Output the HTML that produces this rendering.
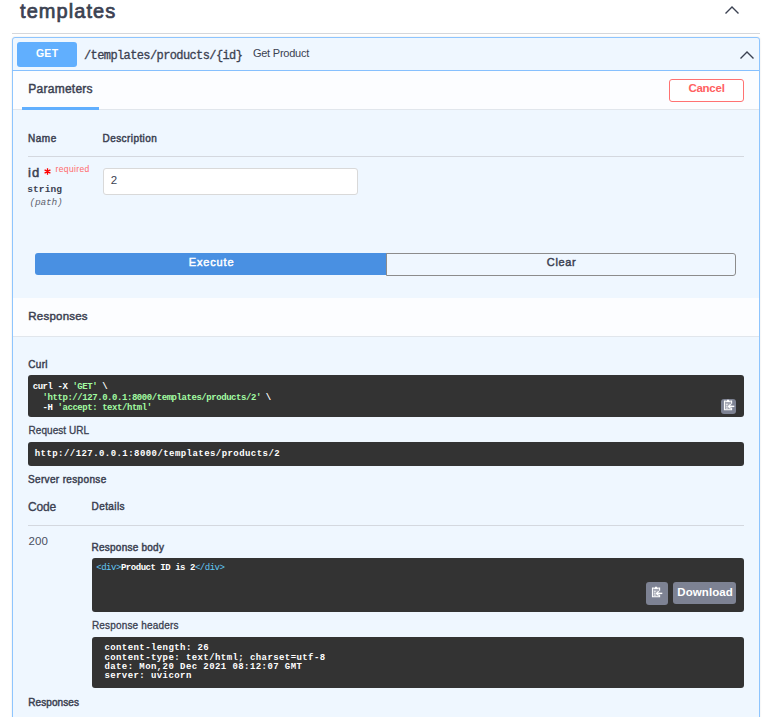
<!DOCTYPE html>
<html><head><meta charset="utf-8"><style>
html,body{margin:0;padding:0;background:#fff;}
body{width:768px;height:717px;overflow:hidden;position:relative;font-family:'Liberation Sans', sans-serif;}
.t{position:absolute;white-space:nowrap;line-height:1;}
.mono{font-family:'Liberation Mono', monospace;}
.a{position:absolute;box-sizing:border-box;}
</style></head><body>
<div class="a" style="left:12px;top:32.5px;width:748px;height:1.5px;background:#d5d7db"></div>
<div class="a" style="left:723.5px;top:1px;"><svg width="16" height="10" viewBox="0 0 16 10"><path d="M1.5 8.5 L8 2 L14.5 8.5" fill="none" stroke="#3b4151" stroke-width="1.4"/></svg></div>
<div class="a" style="left:12px;top:37px;width:748px;height:700px;border:1px solid #8ec5fe;border-radius:3px;background:#eff7ff;box-shadow:0 0 2px rgba(0,0,0,.12)"></div>
<div class="a" style="left:12px;top:69.8px;width:747px;height:1.4px;background:#86c0fe"></div>
<div class="a" style="left:17px;top:42px;width:60px;height:24.6px;background:#61affe;border-radius:3px"></div>
<div class="a" style="left:738.5px;top:46px;"><svg width="16" height="10" viewBox="0 0 16 10"><path d="M1.5 8.5 L8 2 L14.5 8.5" fill="none" stroke="#3b4151" stroke-width="1.4"/></svg></div>
<div class="a" style="left:13px;top:71.2px;width:745.6px;height:38.8px;background:#fcfdff;border-bottom:1px solid #e1e6ec"></div>
<div class="a" style="left:21.7px;top:106.8px;width:77px;height:3px;background:#61affe"></div>
<div class="a" style="left:669px;top:78.5px;width:75px;height:23px;border:1.5px solid #ff7272;border-radius:3px;background:#fff"></div>
<div class="a" style="left:27.5px;top:155.8px;width:716px;height:1px;background:#d4d8df"></div>
<div class="a" style="left:102.5px;top:167.5px;width:255px;height:27.3px;border:1px solid #d9d9d9;border-radius:3px;background:#fff"></div>
<div class="a" style="left:35px;top:253px;width:351.5px;height:22.3px;background:#4990e2;border-radius:3px 0 0 3px"></div>
<div class="a" style="left:386px;top:253px;width:350px;height:22.6px;border:1.5px solid #8c8c8c;border-radius:0 3px 3px 0"></div>
<svg class="a" style="left:43px;top:166.5px" width="9" height="9" viewBox="0 0 9 9"><path d="M4.5 1.2V7.8M1.6 2.85L7.4 6.15M1.6 6.15L7.4 2.85" stroke="#ff0000" stroke-width="1.3" fill="none"/></svg>
<div class="a" style="left:13px;top:298px;width:745.6px;height:38.5px;background:#fcfdff;border-bottom:1px solid #e1e6ec"></div>
<div class="a" style="left:28px;top:375px;width:716px;height:41.5px;background:#333;border-radius:3px"></div>
<div class="a" style="left:721px;top:398.8px;width:15px;height:14.8px;background:#7d8293;border-radius:3px"></div><svg class="a" style="left:723px;top:399px" width="11.5" height="11.5" viewBox="0 0 12 12"><rect x="1.5" y="2.2" width="7.5" height="9" fill="rgba(255,255,255,.3)"/><path d="M3 2.2H1.5V11.2H9V9M9 5V2.2H7.5" fill="none" stroke="#fff" stroke-width="1.1"/><path d="M3 3.2L4.2 0.8H6.3L7.5 3.2Z" fill="#fff"/><path d="M3 5.5H5M3 7.5H4.5M3 9.5H5" stroke="#fff" stroke-width="0.9"/><path d="M11.8 7.7H6.2" stroke="#fff" stroke-width="1.5"/><path d="M8 5.5L5.6 7.7L8 9.9" fill="none" stroke="#fff" stroke-width="1.2"/></svg>
<div class="a" style="left:28px;top:442px;width:716px;height:24px;background:#333;border-radius:3px"></div>
<div class="a" style="left:27.5px;top:525px;width:716px;height:1px;background:#d4d8df"></div>
<div class="a" style="left:91.5px;top:558px;width:652.3px;height:54px;background:#333;border-radius:3px"></div>
<div class="a" style="left:646px;top:582px;width:22.3px;height:22.6px;background:#7d8293;border-radius:3px"></div><svg class="a" style="left:651px;top:586px" width="11.5" height="11.5" viewBox="0 0 12 12"><rect x="1.5" y="2.2" width="7.5" height="9" fill="rgba(255,255,255,.3)"/><path d="M3 2.2H1.5V11.2H9V9M9 5V2.2H7.5" fill="none" stroke="#fff" stroke-width="1.1"/><path d="M3 3.2L4.2 0.8H6.3L7.5 3.2Z" fill="#fff"/><path d="M3 5.5H5M3 7.5H4.5M3 9.5H5" stroke="#fff" stroke-width="0.9"/><path d="M11.8 7.7H6.2" stroke="#fff" stroke-width="1.5"/><path d="M8 5.5L5.6 7.7L8 9.9" fill="none" stroke="#fff" stroke-width="1.2"/></svg>
<div class="a" style="left:672.7px;top:582.2px;width:63.4px;height:22.3px;background:#7d8293;border-radius:3px"></div>
<div class="a" style="left:91.5px;top:637px;width:652.5px;height:51px;background:#333;border-radius:3px"></div>
<div class="t" id="t0" style="left:20.00px;top:0.57px;font-size:20px;font-family:'Liberation Sans', sans-serif;font-weight:400;color:#3b4151;letter-spacing:1.073px;-webkit-text-stroke:0.7px #3b4151;">templates</div>
<div class="t" id="t1" style="left:35.90px;top:47.86px;font-size:10.5px;font-family:'Liberation Sans', sans-serif;font-weight:700;color:#fff;letter-spacing:0.303px;">GET</div>
<div class="t" id="t2" style="left:84.00px;top:50.31px;font-size:12px;font-family:'Liberation Mono', monospace;font-weight:400;color:#3b4151;letter-spacing:-0.606px;-webkit-text-stroke:0.3px #3b4151;">/templates/products/{id}</div>
<div class="t" id="t3" style="left:252.90px;top:47.89px;font-size:11px;font-family:'Liberation Sans', sans-serif;font-weight:400;color:#3b4151;letter-spacing:-0.225px;">Get Product</div>
<div class="t" id="t4" style="left:28.30px;top:82.84px;font-size:12px;font-family:'Liberation Sans', sans-serif;font-weight:400;color:#3b4151;letter-spacing:0.252px;-webkit-text-stroke:0.45px #3b4151;">Parameters</div>
<div class="t" id="t5" style="left:688.40px;top:83.06px;font-size:11.5px;font-family:'Liberation Sans', sans-serif;font-weight:700;color:#ff6060;letter-spacing:-0.254px;">Cancel</div>
<div class="t" id="t6" style="left:28.00px;top:134.28px;font-size:10px;font-family:'Liberation Sans', sans-serif;font-weight:400;color:#3b4151;letter-spacing:0.504px;-webkit-text-stroke:0.45px #3b4151;">Name</div>
<div class="t" id="t7" style="left:102.50px;top:134.28px;font-size:10px;font-family:'Liberation Sans', sans-serif;font-weight:400;color:#3b4151;letter-spacing:0.427px;-webkit-text-stroke:0.45px #3b4151;">Description</div>
<div class="t" id="t8" style="left:28.00px;top:165.69px;font-size:13px;font-family:'Liberation Sans', sans-serif;font-weight:400;color:#3b4151;letter-spacing:1.175px;-webkit-text-stroke:0.5px #3b4151;">id</div>
<div class="t" id="t9" style="left:55.50px;top:165.30px;font-size:8.5px;font-family:'Liberation Sans', sans-serif;font-weight:400;color:#ff6a6b;letter-spacing:0.373px;">required</div>
<div class="t" id="t10" style="left:27.20px;top:185.02px;font-size:9.5px;font-family:'Liberation Mono', monospace;font-weight:700;color:#3b4151;letter-spacing:0.116px;">string</div>
<div class="t" id="t11" style="left:29.50px;top:197.72px;font-size:9.5px;font-family:'Liberation Mono', monospace;font-weight:400;color:#5f6470;letter-spacing:-0.204px;font-style:italic;">(path)</div>
<div class="t" id="t12" style="left:110.80px;top:174.66px;font-size:11.5px;font-family:'Liberation Sans', sans-serif;font-weight:400;color:#3b4151;letter-spacing:0.000px;">2</div>
<div class="t" id="t13" style="left:188.75px;top:257.19px;font-size:11px;font-family:'Liberation Sans', sans-serif;font-weight:400;color:#fff;letter-spacing:0.850px;-webkit-text-stroke:0.45px #fff;">Execute</div>
<div class="t" id="t14" style="left:546.80px;top:257.09px;font-size:11px;font-family:'Liberation Sans', sans-serif;font-weight:400;color:#3b4151;letter-spacing:0.676px;-webkit-text-stroke:0.45px #3b4151;">Clear</div>
<div class="t" id="t15" style="left:28.30px;top:311.06px;font-size:11.5px;font-family:'Liberation Sans', sans-serif;font-weight:400;color:#3b4151;letter-spacing:0.219px;-webkit-text-stroke:0.45px #3b4151;">Responses</div>
<div class="t" id="t16" style="left:28.30px;top:360.03px;font-size:10px;font-family:'Liberation Sans', sans-serif;font-weight:400;color:#3b4151;letter-spacing:0.319px;-webkit-text-stroke:0.45px #3b4151;">Curl</div>
<div class="t" id="t17" style="left:28.50px;top:425.73px;font-size:10px;font-family:'Liberation Sans', sans-serif;font-weight:400;color:#3b4151;letter-spacing:0.057px;-webkit-text-stroke:0.3px #3b4151;">Request URL</div>
<div class="t" id="t18" style="left:28.00px;top:474.73px;font-size:10px;font-family:'Liberation Sans', sans-serif;font-weight:400;color:#3b4151;letter-spacing:0.345px;-webkit-text-stroke:0.45px #3b4151;">Server response</div>
<div class="t" id="t19" style="left:28.00px;top:501.34px;font-size:12px;font-family:'Liberation Sans', sans-serif;font-weight:400;color:#3b4151;letter-spacing:-0.162px;-webkit-text-stroke:0.35px #3b4151;">Code</div>
<div class="t" id="t20" style="left:91.60px;top:501.78px;font-size:10px;font-family:'Liberation Sans', sans-serif;font-weight:400;color:#3b4151;letter-spacing:0.404px;-webkit-text-stroke:0.45px #3b4151;">Details</div>
<div class="t" id="t21" style="left:28.50px;top:535.76px;font-size:11.5px;font-family:'Liberation Sans', sans-serif;font-weight:400;color:#4a5060;letter-spacing:0.081px;">200</div>
<div class="t" id="t22" style="left:91.60px;top:542.83px;font-size:10px;font-family:'Liberation Sans', sans-serif;font-weight:400;color:#3b4151;letter-spacing:0.233px;-webkit-text-stroke:0.45px #3b4151;">Response body</div>
<div class="t" id="t23" style="left:91.90px;top:620.73px;font-size:10px;font-family:'Liberation Sans', sans-serif;font-weight:400;color:#3b4151;letter-spacing:0.176px;-webkit-text-stroke:0.3px #3b4151;">Response headers</div>
<div class="t" id="t24" style="left:28.30px;top:697.73px;font-size:10px;font-family:'Liberation Sans', sans-serif;font-weight:400;color:#3b4151;letter-spacing:0.071px;-webkit-text-stroke:0.45px #3b4151;">Responses</div>
<div class="t" id="t25" style="left:677.30px;top:586.66px;font-size:11.5px;font-family:'Liberation Sans', sans-serif;font-weight:700;color:#fff;letter-spacing:0.092px;">Download</div>
<div class="t mono" style="left:32.7px;top:382.51px;font-size:9px;letter-spacing:-0.440px;font-weight:700;color:#fff">curl&nbsp;-X&nbsp;<span style="color:#a2fca2">'GET'</span>&nbsp;\</div><div class="t mono" style="left:32.7px;top:393.51px;font-size:9px;letter-spacing:-0.440px;font-weight:700;color:#fff">&nbsp;&nbsp;<span style="color:#a2fca2">'http://127.0.0.1:8000/templates/products/2'</span>&nbsp;\</div><div class="t mono" style="left:32.7px;top:404.01px;font-size:9px;letter-spacing:-0.440px;font-weight:700;color:#fff">&nbsp;&nbsp;-H&nbsp;<span style="color:#a2fca2">'accept:&nbsp;text/html'</span></div>
<div class="t mono" style="left:34.75px;top:450.21px;font-size:9px;letter-spacing:0.440px;font-weight:700;color:#fff">http://127.0.0.1:8000/templates/products/2</div>
<div class="t mono" style="left:96.25px;top:563.91px;font-size:9px;letter-spacing:-0.470px;font-weight:700;color:#fff"><span style="color:#62c8f3;font-weight:400">&lt;div&gt;</span>Product&nbsp;ID&nbsp;is&nbsp;2<span style="color:#62c8f3;font-weight:400">&lt;/div&gt;</span></div>
<div class="t mono" style="left:104.4px;top:644.41px;font-size:9px;letter-spacing:0.420px;font-weight:700;color:#fff">content-length:&nbsp;26</div><div class="t mono" style="left:104.4px;top:653.51px;font-size:9px;letter-spacing:0.420px;font-weight:700;color:#fff">content-type:&nbsp;text/html;&nbsp;charset=utf-8</div><div class="t mono" style="left:104.4px;top:662.91px;font-size:9px;letter-spacing:0.420px;font-weight:700;color:#fff">date:&nbsp;Mon,20&nbsp;Dec&nbsp;2021&nbsp;08:12:07&nbsp;GMT</div><div class="t mono" style="left:104.4px;top:672.31px;font-size:9px;letter-spacing:0.420px;font-weight:700;color:#fff">server:&nbsp;uvicorn</div>
</body></html>
